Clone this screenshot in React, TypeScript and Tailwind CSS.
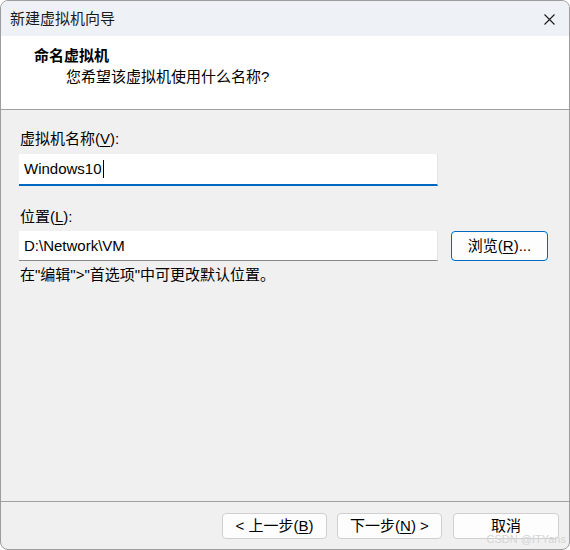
import React from "react";

const U = ({ children }: { children: React.ReactNode }) => (
  <span className="underline underline-offset-[2px] decoration-[1px]">{children}</span>
);

export default function App() {
  return (
    <div className="w-[570px] h-[550px] bg-white relative overflow-hidden font-['Liberation_Sans','Noto_Sans_CJK_SC',sans-serif] text-[15px] text-black">
      <div className="w-full h-full border border-[#9c9c9c] rounded-[8px] overflow-hidden flex flex-col bg-[#f0f0f0]">
        {/* Title bar */}
        <div className="h-[35px] shrink-0 bg-[#eef2f7] flex items-center justify-between pl-[9px] pr-[14px]">
          <span className="leading-[20px] text-[#1b1b1b] mt-[1px]">新建虚拟机向导</span>
          <svg width="11" height="11" viewBox="0 0 11 11" className="mt-[1px]">
            <path d="M0.5 0.5 L10.5 10.5 M10.5 0.5 L0.5 10.5" stroke="#1b1b1b" strokeWidth="1.1" fill="none" />
          </svg>
        </div>
        {/* Header */}
        <div className="h-[74px] shrink-0 bg-white border-b border-[#a0a0a0] flex flex-col pl-[33px] pt-[10px]">
          <div className="font-bold leading-[20px]">命名虚拟机</div>
          <div className="leading-[20px] pl-[32px] mt-[1px]">您希望该虚拟机使用什么名称?</div>
        </div>
        {/* Body */}
        <div className="flex-1 flex flex-col pl-[18px] pt-[19px]">
          <div className="leading-[20px] pl-[1px]">
            虚拟机名称(<U>V</U>):
          </div>
          <div className="mt-[5px] w-[419px] h-[32px] bg-white border-r border-[#e3e3e3] border-b-2 border-b-[#0067c0] flex items-center pl-[5px]">
            <span className="leading-[20px]">Windows10</span>
            <span className="w-[1px] h-[18px] bg-black ml-[1px]" />
          </div>
          <div className="leading-[20px] pl-[1px] mt-[21px]">
            位置(<U>L</U>):
          </div>
          <div className="mt-[4px] flex items-center">
            <div className="w-[419px] h-[30px] bg-white border-r border-[#e3e3e3] border-b border-b-[#8a8a8a] flex items-center pl-[5px]">
              <span className="leading-[20px]">D:\Network\VM</span>
            </div>
            <button className="ml-[13px] w-[97px] h-[30px] rounded-[4px] border border-[#0067c0] bg-[#fdfdfd] flex items-center justify-center leading-[20px]">
              浏览(<U>R</U>)...
            </button>
          </div>
          <div className="leading-[20px] mt-[4px] pl-[1px]">在"编辑"&gt;"首选项"中可更改默认位置。</div>
        </div>
        {/* Footer */}
        <div className="h-[48px] shrink-0 border-t border-[#a0a0a0] flex justify-end items-start pt-[11px] pr-[10px] gap-[10px]">
          <button className="w-[105px] h-[26px] rounded-[4px] border border-[#d0d0d0] bg-[#fdfdfd] flex items-center justify-center leading-[20px]">
            &lt; 上一步(<U>B</U>)
          </button>
          <button className="w-[105px] h-[26px] rounded-[4px] border border-[#d0d0d0] bg-[#fdfdfd] flex items-center justify-center leading-[20px]">
            下一步(<U>N</U>) &gt;
          </button>
          <button className="w-[106px] h-[26px] rounded-[4px] border border-[#d0d0d0] bg-[#fdfdfd] flex items-center justify-center leading-[20px] ml-[1px]">
            取消
          </button>
        </div>
      </div>
      <div className="absolute right-[4px] bottom-[5px] text-[11px] leading-[12px] text-[#d4d4d4] font-['Liberation_Sans',sans-serif]">
        CSDN @ITYans
      </div>
    </div>
  );
}
